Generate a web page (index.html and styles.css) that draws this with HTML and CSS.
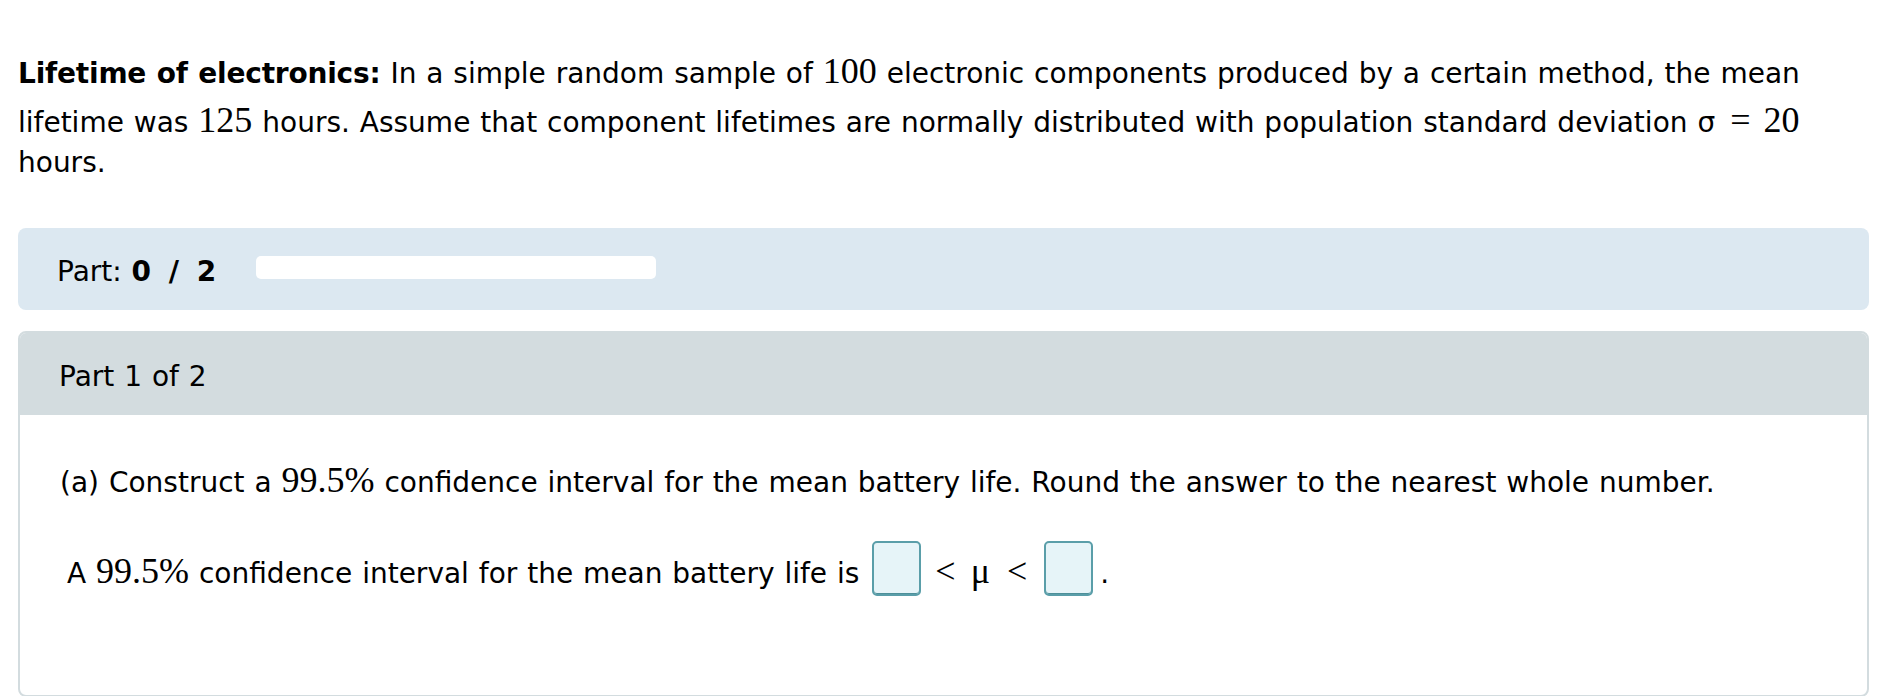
FILE: index.html
```html
<!DOCTYPE html>
<html lang="en">
<head>
<meta charset="utf-8">
<title>Lifetime of electronics</title>
<link rel="stylesheet" href="styles.css">
</head>
<body>
<div class="page">
  <p class="intro"><b>Lifetime of electronics:</b> In a simple random sample of <span class="m">100</span> electronic components produced by a certain method, the mean lifetime was <span class="m">125</span> hours. Assume that component lifetimes are normally distributed with population standard deviation <span class="sig">σ<span class="m eq">=</span><span class="m">20</span></span> hours.</p>

  <div class="progress">
    <span class="plabel">Part: <b>0 <span class="sl">/</span> 2</b></span>
    <span class="bar"></span>
  </div>

  <div class="part">
    <div class="part-head">Part 1 of 2</div>
    <div class="part-body">
      <p class="q">(a) Construct a <span class="m">99.5%</span> confidence interval for the mean battery life. Round the answer to the nearest whole number.</p>
      <p class="answer">A <span class="m">99.5%</span> confidence interval for the mean battery life is<span class="box box-first"></span><span class="m lt">&lt;</span><span class="m mu">μ</span><span class="m lt lt-second">&lt;</span><span class="box box-second"></span><span class="dot">.</span></p>
    </div>
  </div>
</div>
</body>
</html>
```

FILE: styles.css
```css
html, body {
  margin: 0;
  padding: 0;
  background: #ffffff;
}

body {
  font-family: "DejaVu Sans", Verdana, sans-serif;
  font-size: 28px;
  color: #000000;
  word-spacing: 1px;
}

.page {
  padding: 0 11px 0 18px;
}

.m {
  font-family: "Liberation Serif", "Times New Roman", serif;
  font-size: 36px;
  line-height: 36px;
}

.intro {
  margin: 54px 0 0 0;
  line-height: 40px;
}

.intro .m {
  line-height: 0;
}

.intro b {
  font-weight: bold;
  letter-spacing: -0.2px;
}

.sig {
  display: inline-block;
  padding-top: 9px;
  line-height: 40px;
}

.eq {
  margin: 0 13px 0 15px;
}

.progress {
  margin-top: 45px;
  height: 82px;
  box-sizing: border-box;
  padding: 29px 0 0 39px;
  background: #dce8f1;
  border-radius: 8px;
  display: flex;
  align-items: flex-start;
}

.plabel {
  line-height: 30px;
  white-space: nowrap;
}

.sl {
  margin: 0 7px;
}

.bar {
  margin-top: -1px;
  margin-left: 40px;
  width: 400px;
  height: 23px;
  background: #ffffff;
  border-radius: 5px;
}

.part {
  margin-top: 21px;
  height: 366px;
  box-sizing: border-box;
  border: 2px solid #d3dcdf;
  border-radius: 8px;
  overflow: hidden;
}

.part-head {
  height: 82px;
  box-sizing: border-box;
  padding: 24px 0 0 39px;
  line-height: 40px;
  background: #d3dcdf;
}

.part-body {
  padding: 47px 0 0 40px;
}

.q {
  margin: 0;
  line-height: 40px;
}

.answer {
  margin: 38px 0 0 7px;
  line-height: 40px;
}

.box {
  display: inline-block;
  width: 49px;
  height: 55px;
  box-sizing: border-box;
  vertical-align: -13px;
  border: 2px solid #5a9ea9;
  border-radius: 5px;
  background: #e6f4f8;
  box-shadow: inset 0 -1px 0 #4d8f99;
}

.box-first {
  margin-left: 13px;
}

.lt {
  margin-left: 14px;
}

.mu {
  margin-left: 15px;
}

.lt-second {
  margin-left: 17px;
}

.box-second {
  margin-left: 17px;
}

.dot {
  margin-left: 7px;
}
```
